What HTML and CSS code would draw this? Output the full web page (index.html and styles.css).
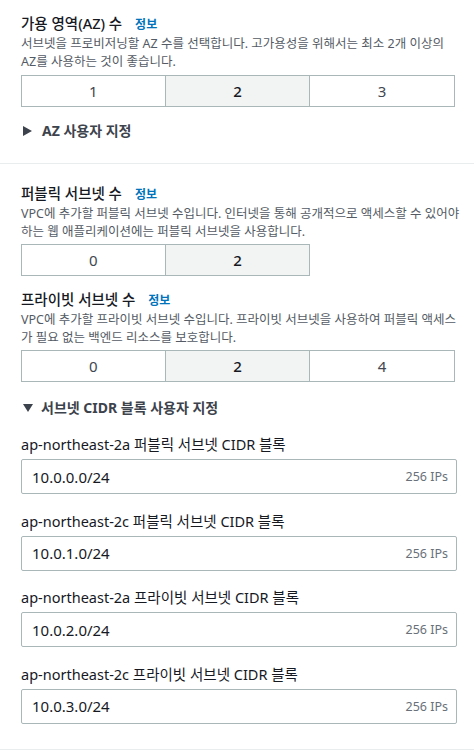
FILE: index.html
```html
<!DOCTYPE html>
<html lang="ko">
<head>
<meta charset="utf-8">
<link rel="stylesheet" href="styles.css">
</head>
<body>
<div class="page">
  <section class="section first">
    <div class="title"><span>가용 영역(AZ) 수</span><a class="info">정보</a></div>
    <p class="desc">서브넷을 프로비저닝할 AZ 수를 선택합니다. 고가용성을 위해서는 최소 2개 이상의 AZ를 사용하는 것이 좋습니다.</p>
    <div class="seg">
      <div class="opt">1</div>
      <div class="opt sel">2</div>
      <div class="opt">3</div>
    </div>
    <div class="toggle"><span class="tri right"></span>AZ 사용자 지정</div>
  </section>
  <section class="section second">
    <div class="title"><span>퍼블릭 서브넷 수</span><a class="info">정보</a></div>
    <p class="desc">VPC에 추가할 퍼블릭 서브넷 수입니다. 인터넷을 통해 공개적으로 액세스할 수 있어야 하는 웹 애플리케이션에는 퍼블릭 서브넷을 사용합니다.</p>
    <div class="seg">
      <div class="opt">0</div>
      <div class="opt sel">2</div>
    </div>
    <div class="title t3"><span>프라이빗 서브넷 수</span><a class="info">정보</a></div>
    <p class="desc">VPC에 추가할 프라이빗 서브넷 수입니다. 프라이빗 서브넷을 사용하여 퍼블릭 액세스가 필요 없는 백엔드 리소스를 보호합니다.</p>
    <div class="seg">
      <div class="opt">0</div>
      <div class="opt sel">2</div>
      <div class="opt">4</div>
    </div>
    <div class="toggle t2"><span class="tri down"></span>서브넷 CIDR 블록 사용자 지정</div>
    <div class="field">
      <div class="label">ap-northeast-2a 퍼블릭 서브넷 CIDR 블록</div>
      <div class="input"><span class="val">10.0.0.0/24</span><span class="ips">256 IPs</span></div>
    </div>
    <div class="field">
      <div class="label">ap-northeast-2c 퍼블릭 서브넷 CIDR 블록</div>
      <div class="input"><span class="val">10.0.1.0/24</span><span class="ips">256 IPs</span></div>
    </div>
    <div class="field">
      <div class="label">ap-northeast-2a 프라이빗 서브넷 CIDR 블록</div>
      <div class="input"><span class="val">10.0.2.0/24</span><span class="ips">256 IPs</span></div>
    </div>
    <div class="field">
      <div class="label">ap-northeast-2c 프라이빗 서브넷 CIDR 블록</div>
      <div class="input"><span class="val">10.0.3.0/24</span><span class="ips">256 IPs</span></div>
    </div>
  </section>
</div>
</body>
</html>
```

FILE: styles.css
```css
* { box-sizing: border-box; }
html, body { margin: 0; padding: 0; background: #ffffff; }
body {
  font-family: "Noto Sans", "Noto Sans CJK KR", sans-serif;
  color: #16191f;
  width: 474px;
  height: 753px;
  overflow: hidden;
}
.section {
  padding: 0 12px 0 21px;
  border-bottom: 1px solid #eaeded;
}
.first { padding-top: 12px; padding-bottom: 21px; }
.second { padding-top: 18.5px; padding-bottom: 25px; }
.title {
  display: flex;
  align-items: baseline;
  height: 22px;
  font-size: 14.5px;
  line-height: 22px;
  font-weight: 500;
  color: #16191f;
}
.info {
  font-size: 12px;
  line-height: 22px;
  font-weight: 700;
  color: #0073bb;
  margin-left: 13px;
}
.desc {
  margin: 1px 0 0;
  font-size: 12.5px;
  line-height: 17.5px;
  color: #545b64;
}
.seg {
  display: flex;
  margin-top: 4px;
  width: 434px;
  height: 32px;
}
.first .seg { margin-top: 5px; }
.opt {
  width: 144.67px;
  display: flex;
  align-items: center;
  justify-content: center;
  border: 1px solid #aab7b8;
  border-left-width: 0;
  font-size: 15px;
  color: #414750;
  background: #fff;
}
.opt:first-child { border-left-width: 1px; }
.opt.sel { background: #f2f3f3; color: #16191f; font-weight: 500; }
.t3 { margin-top: 12px; }
.toggle {
  display: flex;
  align-items: center;
  height: 22px;
  margin-top: 12.5px;
  font-size: 14px;
  line-height: 22px;
  font-weight: 700;
  color: #3d434c;
}
.toggle.t2 { margin-top: 14.5px; }
.tri { display: inline-block; width: 0; height: 0; }
.tri.right {
  margin-left: 2px;
  margin-right: 10px;
  border-top: 5.5px solid transparent;
  border-bottom: 5.5px solid transparent;
  border-left: 9px solid #3d434c;
}
.tri.down {
  margin-left: 2px;
  margin-right: 8px;
  border-left: 5.5px solid transparent;
  border-right: 5.5px solid transparent;
  border-top: 8px solid #3d434c;
}
.field { margin-top: 15.5px; }
.field + .field { margin-top: 16.5px; }
.label {
  height: 20px;
  font-size: 14.5px;
  line-height: 20px;
  color: #16191f;
}
.input {
  margin-top: 5px;
  width: 436px;
  height: 35px;
  border: 1px solid #aab7b8;
  border-radius: 2px;
  display: flex;
  align-items: center;
  justify-content: space-between;
  padding: 0 8px 0 10px;
}
.val { font-size: 15px; color: #16191f; }
.ips { font-size: 12.5px; color: #687078; }
```
